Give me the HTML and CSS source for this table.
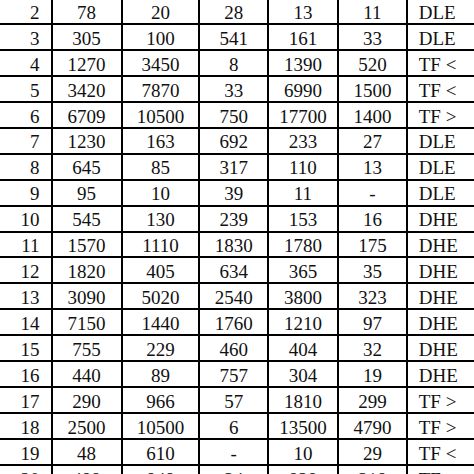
FILE: index.html
```html
<!DOCTYPE html>
<html>
<head>
<meta charset="utf-8">
<link rel="stylesheet" href="styles.css">
</head>
<body>
<div class="grid">
<div class="c id">2</div><div class="c">78</div><div class="c">20</div><div class="c">28</div><div class="c">13</div><div class="c">11</div><div class="c t">DLE</div>
<div class="c id">3</div><div class="c">305</div><div class="c">100</div><div class="c">541</div><div class="c">161</div><div class="c">33</div><div class="c t">DLE</div>
<div class="c id">4</div><div class="c">1270</div><div class="c">3450</div><div class="c">8</div><div class="c">1390</div><div class="c">520</div><div class="c t">TF &lt;</div>
<div class="c id">5</div><div class="c">3420</div><div class="c">7870</div><div class="c">33</div><div class="c">6990</div><div class="c">1500</div><div class="c t">TF &lt;</div>
<div class="c id">6</div><div class="c">6709</div><div class="c">10500</div><div class="c">750</div><div class="c">17700</div><div class="c">1400</div><div class="c t">TF &gt;</div>
<div class="c id">7</div><div class="c">1230</div><div class="c">163</div><div class="c">692</div><div class="c">233</div><div class="c">27</div><div class="c t">DLE</div>
<div class="c id">8</div><div class="c">645</div><div class="c">85</div><div class="c">317</div><div class="c">110</div><div class="c">13</div><div class="c t">DLE</div>
<div class="c id">9</div><div class="c">95</div><div class="c">10</div><div class="c">39</div><div class="c">11</div><div class="c">-</div><div class="c t">DLE</div>
<div class="c id">10</div><div class="c">545</div><div class="c">130</div><div class="c">239</div><div class="c">153</div><div class="c">16</div><div class="c t">DHE</div>
<div class="c id">11</div><div class="c">1570</div><div class="c">1110</div><div class="c">1830</div><div class="c">1780</div><div class="c">175</div><div class="c t">DHE</div>
<div class="c id">12</div><div class="c">1820</div><div class="c">405</div><div class="c">634</div><div class="c">365</div><div class="c">35</div><div class="c t">DHE</div>
<div class="c id">13</div><div class="c">3090</div><div class="c">5020</div><div class="c">2540</div><div class="c">3800</div><div class="c">323</div><div class="c t">DHE</div>
<div class="c id">14</div><div class="c">7150</div><div class="c">1440</div><div class="c">1760</div><div class="c">1210</div><div class="c">97</div><div class="c t">DHE</div>
<div class="c id">15</div><div class="c">755</div><div class="c">229</div><div class="c">460</div><div class="c">404</div><div class="c">32</div><div class="c t">DHE</div>
<div class="c id">16</div><div class="c">440</div><div class="c">89</div><div class="c">757</div><div class="c">304</div><div class="c">19</div><div class="c t">DHE</div>
<div class="c id">17</div><div class="c">290</div><div class="c">966</div><div class="c">57</div><div class="c">1810</div><div class="c">299</div><div class="c t">TF &gt;</div>
<div class="c id">18</div><div class="c">2500</div><div class="c">10500</div><div class="c">6</div><div class="c">13500</div><div class="c">4790</div><div class="c t">TF &gt;</div>
<div class="c id">19</div><div class="c">48</div><div class="c">610</div><div class="c">-</div><div class="c">10</div><div class="c">29</div><div class="c t">TF &lt;</div>
<div class="c id">20</div><div class="c">488</div><div class="c">848</div><div class="c">24</div><div class="c">828</div><div class="c">218</div><div class="c t">TF &lt;</div>
</div>
</body>
</html>
```

FILE: styles.css
```css
html, body {
  margin: 0;
  padding: 0;
  background: #fff;
  overflow: hidden;
  width: 474px;
  height: 474px;
}

.grid {
  display: grid;
  grid-template-columns: 50.5px 68.2px 75.6px 67px 67.4px 67.6px 80px;
  grid-auto-rows: 23.94px;
  gap: 2px;
  background: #000;
  margin-top: -0.94px;
  width: 488.3px;
  font-family: "Liberation Serif", "Times New Roman", serif;
  font-size: 19px;
  color: #111;
}

.c {
  background: #fff;
  text-align: center;
  line-height: 21px;
  padding-top: 2.7px;
  white-space: nowrap;
  overflow: hidden;
}

.id {
  text-align: right;
  padding-right: 11px;
}

.t {
  text-align: left;
  padding-left: 10.5px;
}
```
